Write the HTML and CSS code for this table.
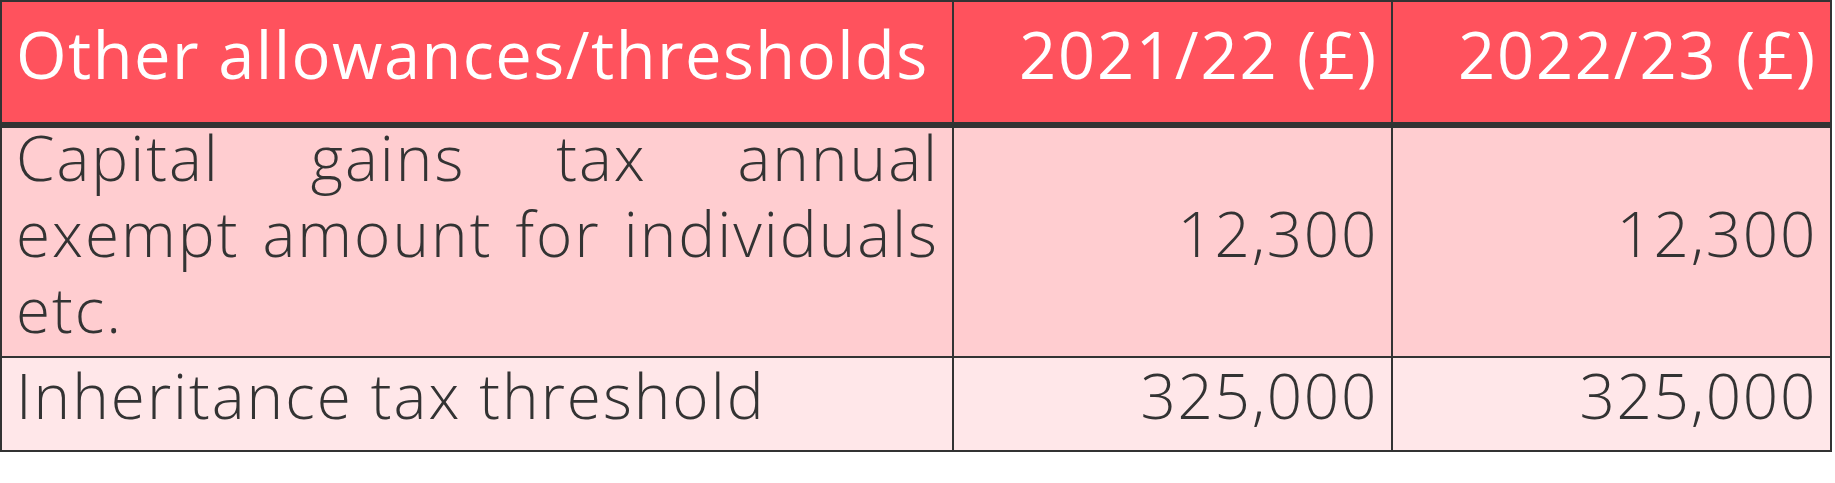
FILE: index.html
```html
<!DOCTYPE html>
<html lang="en">
<head>
<meta charset="utf-8">
<title>Other allowances/thresholds</title>
<link rel="stylesheet" href="styles.css">
</head>
<body>
<table class="rates">
  <colgroup>
    <col class="col-label">
    <col class="col-year">
    <col class="col-year">
  </colgroup>
  <thead>
    <tr>
      <th class="label">Other allowances/thresholds</th>
      <th class="num">2021/22 (£)</th>
      <th class="num">2022/23 (£)</th>
    </tr>
  </thead>
  <tbody>
    <tr class="row-a">
      <td class="label">
        <div class="cell-text">
          <span class="first-line">Capital gains tax annual</span>
          <span class="rest">exempt amount for individuals etc.</span>
        </div>
      </td>
      <td class="num"><div class="cell-text">12,300</div></td>
      <td class="num"><div class="cell-text">12,300</div></td>
    </tr>
    <tr class="row-b">
      <td class="label"><div class="cell-text">Inheritance tax threshold</div></td>
      <td class="num"><div class="cell-text">325,000</div></td>
      <td class="num"><div class="cell-text">325,000</div></td>
    </tr>
  </tbody>
</table>
</body>
</html>
```

FILE: styles.css
```css
html, body {
  margin: 0;
  padding: 0;
  background: #ffffff;
}

.rates {
  border-collapse: separate;
  border-spacing: 0;
  width: 1831px;
  table-layout: fixed;
  border-top: 2px solid #333333;
  border-left: 2px solid #333333;
  font-family: "Open Sans", Roboto, "Liberation Sans", sans-serif;
  color: #333333;
}

.col-label { width: 952px; }
.col-year { width: 439px; }

.rates th,
.rates td {
  border-right: 2px solid #333333;
  border-bottom: 2px solid #333333;
  padding: 0 13px 0 14px;
}

.rates th {
  background: #ff525d;
  color: #ffffff;
  font-weight: 400;
  font-size: 65px;
  letter-spacing: 1.8px;
  line-height: 76px;
  height: 104px;
  padding-bottom: 16px;
  border-bottom-width: 6px;
}

.rates th.label {
  letter-spacing: 1.45px;
}

.rates td {
  font-weight: 300;
  font-size: 62px;
  letter-spacing: 2px;
  line-height: 76px;
}

.rates td.num {
  letter-spacing: 1.7px;
}

.cell-text {
  margin: -9px 0 9px;
}

.label { text-align: left; }
.num { text-align: right; }

.row-a td {
  background: #ffcdd0;
  vertical-align: middle;
}

.row-a td.label {
  vertical-align: top;
}

.row-a .first-line {
  display: block;
  text-align: justify;
  text-align-last: justify;
}

.row-a .rest {
  display: block;
  text-align: justify;
}

.row-b td {
  background: #ffe7e9;
  vertical-align: top;
  padding-top: 8px;
  padding-bottom: 8px;
}
```
